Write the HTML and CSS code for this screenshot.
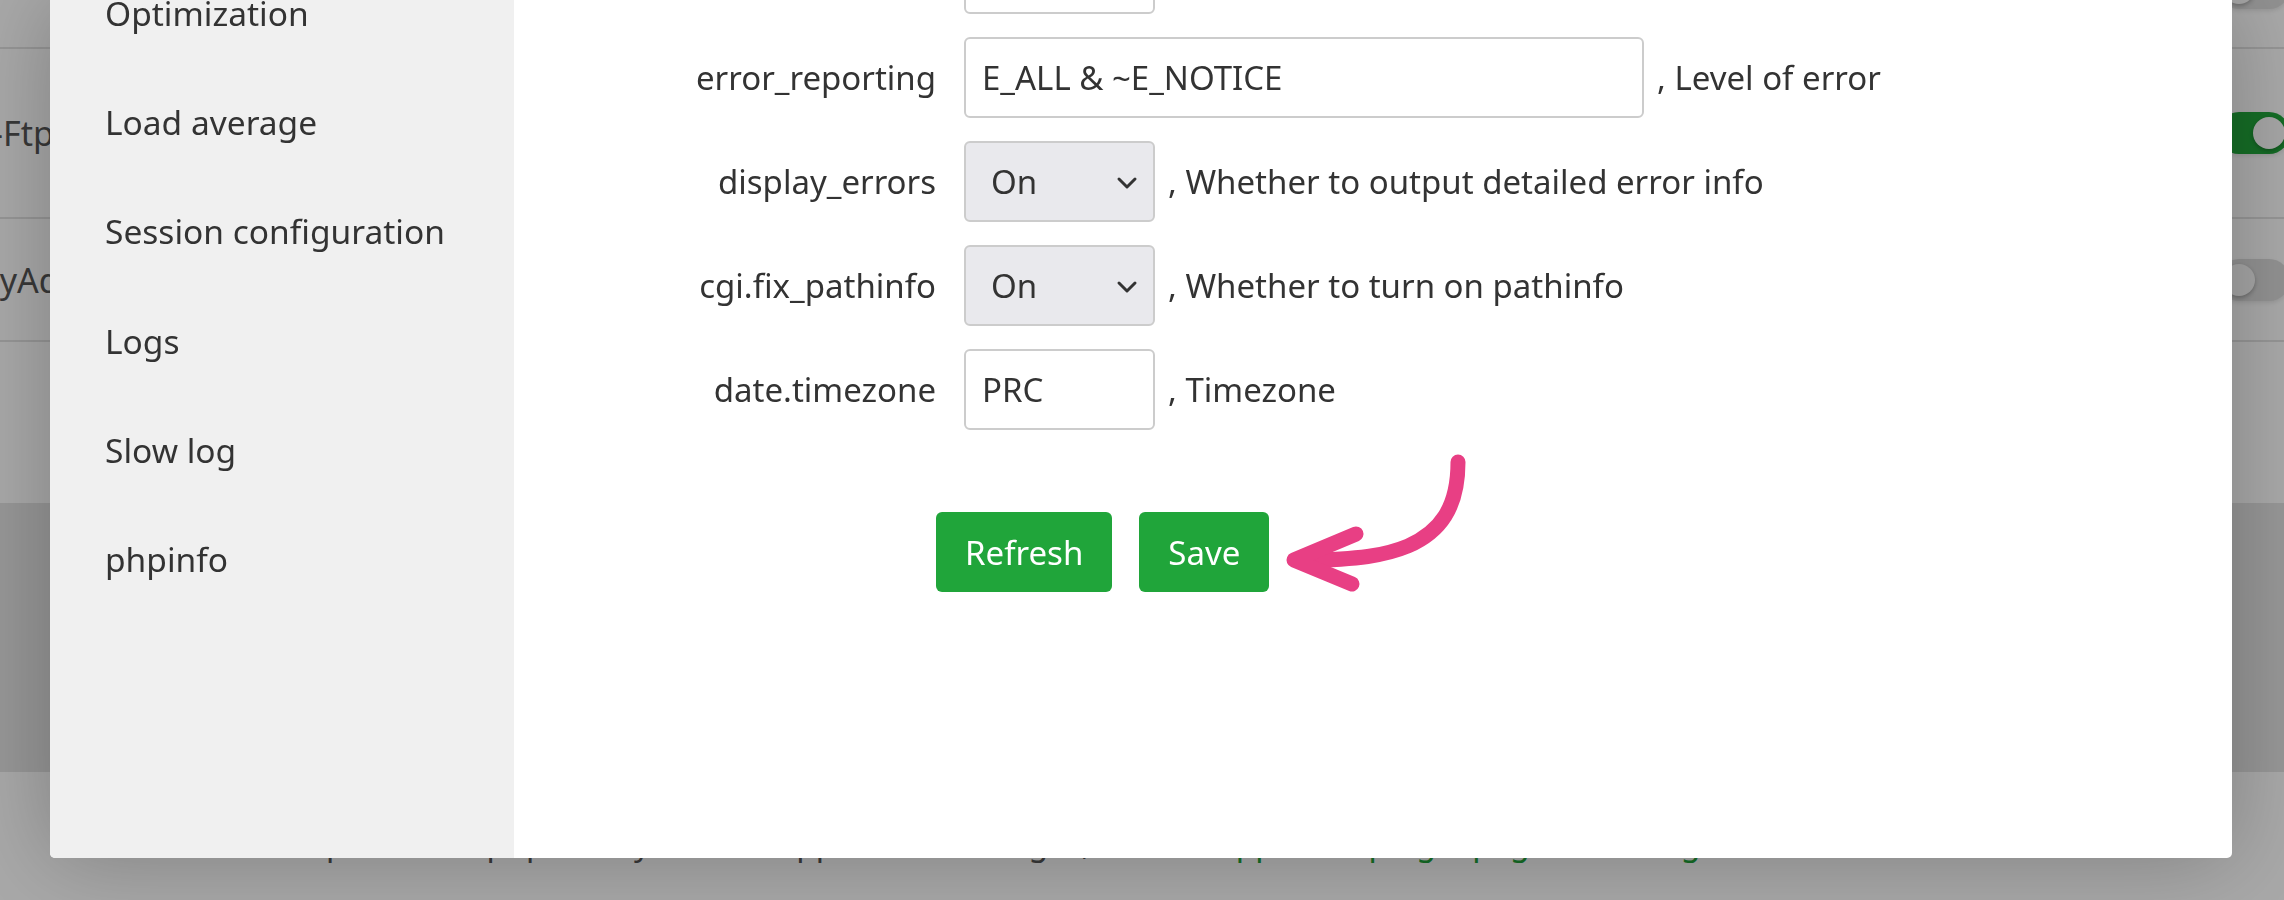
FILE: index.html
```html
<!DOCTYPE html>
<html lang="en">
<head>
  <meta charset="UTF-8" />
  <meta name="viewport" content="width=device-width, initial-scale=1.0" />
  <title>PHP settings</title>
  <link rel="stylesheet" href="styles.css">
</head>
<body>
  <!-- Software list behind the dialog -->
  <div class="page">
    <div class="soft-row row-top">
      <span class="soft-name"></span>
      <span class="switch"></span>
    </div>
    <div class="soft-row row-tall">
      <span class="soft-name">Pure-Ftpd 1.0.49</span>
      <span class="switch on"></span>
    </div>
    <div class="soft-row row-short">
      <span class="soft-name">phpMyAdmin 5.0</span>
      <span class="switch"></span>
    </div>
    <div class="blank"></div>
    <div class="band"></div>
    <p class="tips">Tips: restart php after you have applied the changes, use the <span class="link">app store plugin page to manage</span> the extensions</p>
  </div>

  <div class="mask"></div>

  <!-- PHP settings dialog -->
  <div class="layer">
    <aside class="side-menu">
      <ul>
        <li>Optimization</li>
        <li>Load average</li>
        <li>Session configuration</li>
        <li>Logs</li>
        <li>Slow log</li>
        <li>phpinfo</li>
      </ul>
    </aside>

    <main class="conf">
      <div class="conf-rows">
        <div class="line">
          <span class="tname">default_socket_timeout</span>
          <input type="text" value="60" />
          <span class="desc">, Socket timeout</span>
        </div>
        <div class="line">
          <span class="tname">error_reporting</span>
          <input type="text" class="long" value="E_ALL &amp; ~E_NOTICE" />
          <span class="desc">, Level of error</span>
        </div>
        <div class="line">
          <span class="tname">display_errors</span>
          <div class="sel">
            <select><option>On</option><option>Off</option></select>
            <svg class="chev" width="22" height="14" viewBox="0 0 22 14"><polyline points="3,3 11,11 19,3" fill="none" stroke="#333" stroke-width="3" stroke-linecap="round" stroke-linejoin="round"/></svg>
          </div>
          <span class="desc">, Whether to output detailed error info</span>
        </div>
        <div class="line">
          <span class="tname">cgi.fix_pathinfo</span>
          <div class="sel">
            <select><option>On</option><option>Off</option></select>
            <svg class="chev" width="22" height="14" viewBox="0 0 22 14"><polyline points="3,3 11,11 19,3" fill="none" stroke="#333" stroke-width="3" stroke-linecap="round" stroke-linejoin="round"/></svg>
          </div>
          <span class="desc">, Whether to turn on pathinfo</span>
        </div>
        <div class="line">
          <span class="tname">date.timezone</span>
          <input type="text" value="PRC" />
          <span class="desc">, Timezone</span>
        </div>
      </div>

      <div class="btns">
        <button class="btn">Refresh</button>
        <button class="btn">Save</button>
      </div>

      <!-- hand drawn hint arrow -->
      <svg class="arrow" width="200" height="160" viewBox="0 0 200 160">
        <path d="M178 12 C178 58 160 82 128 96 C104 106 80 109 22 111" fill="none" stroke="#e83f84" stroke-width="15" stroke-linecap="round"/>
        <path d="M76 84 L14 110 L72 134" fill="none" stroke="#e83f84" stroke-width="15" stroke-linecap="round" stroke-linejoin="round"/>
      </svg>
    </main>
  </div>
</body>
</html>
```

FILE: styles.css
```css
/* Reset */
* { box-sizing: border-box; margin: 0; padding: 0; }
html, body { height: 100%; overflow: hidden; }
body { font-family: "Noto Sans", "Open Sans", sans-serif; color: #333; background: #fff; }

/* Page behind the dialog */
.page { margin-top: -71px; }
.soft-row { display: flex; align-items: center; justify-content: space-between; border-bottom: 2px solid #e2e2e2; margin-right: -6px; }
.row-top { height: 120px; }
.row-tall { height: 170px; }
.row-short { height: 123px; }
.soft-name { font-size: 34px; color: #555; margin-left: -82px; }
.row-short .soft-name { margin-left: -94px; }
.switch { width: 72px; height: 42px; border-radius: 21px; background: #dcdcdc; position: relative; box-shadow: 0 2px 4px rgba(0,0,0,0.1); }
.switch::after { content: ""; position: absolute; top: 5px; left: 5px; width: 32px; height: 32px; border-radius: 50%; background: #fafafa; box-shadow: 0 2px 4px rgba(0,0,0,0.25); }
.switch.on { background: #20a53a; }
.switch.on::after { left: 35px; }
.blank { height: 161px; }
.band { height: 269px; background: #e4e4e4; }
.tips { font-size: 32px; line-height: 44px; color: #555; padding-left: 300px; padding-top: 49px; white-space: nowrap; }
.tips .link { color: #20a53a; }

/* Overlay */
.mask { position: fixed; top: 0; left: 0; right: 0; bottom: 0; background: rgba(0,0,0,0.34); }

/* Dialog */
.layer { position: fixed; left: 50px; right: 52px; top: 0; bottom: 42px; background: #fff; display: flex; border-radius: 0 0 5px 5px; box-shadow: 0 0 90px rgba(0,0,0,0.25); overflow: hidden; }
.side-menu { width: 464px; background: #f0f0f0; padding-left: 55px; }
.side-menu ul { list-style: none; margin-top: -41px; }
.side-menu li { font-size: 33.5px; line-height: 109.2px; }

.conf { flex: 1; position: relative; }
.conf-rows { margin-top: -67px; }
.line { display: flex; align-items: center; height: 81px; margin-bottom: 23px; font-size: 33px; }
.line .tname { width: 422px; text-align: right; margin-right: 28px; flex-shrink: 0; }
.line input { width: 191px; height: 81px; padding: 0 16px; border: 2px solid #ccc; border-radius: 6px; font: inherit; color: #333; outline: none; }
.line input.long { width: 680px; }
.line .desc { margin-left: 13px; }

.sel { position: relative; width: 191px; height: 81px; }
.sel select { appearance: none; -webkit-appearance: none; width: 100%; height: 100%; padding-left: 25px; border: 2px solid #ccc; border-radius: 6px; background: #e9e9ed; font: inherit; color: #333; outline: none; }
.sel .chev { position: absolute; left: 152px; top: 35px; pointer-events: none; }

/* Buttons */
.btns { display: flex; gap: 27px; margin-left: 422px; margin-top: 82px; }
.btn { height: 80px; padding: 0 29px; border: none; border-radius: 6px; background: #20a53a; color: #fff; font: inherit; font-size: 33px; cursor: pointer; }
.btn:hover { background: #1c9434; }

/* Annotation */
.arrow { position: absolute; left: 766px; top: 450px; }
```
